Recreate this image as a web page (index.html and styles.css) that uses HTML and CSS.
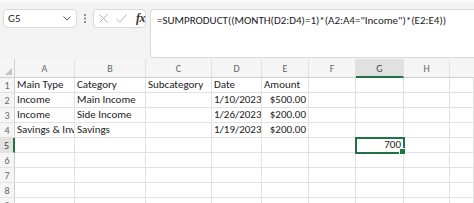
FILE: index.html
```html
<!DOCTYPE html>
<html>
<head>
<meta charset="utf-8">
<link rel="stylesheet" href="styles.css">
</head>
<body>
<div class="app">
  <div class="topbar">
    <div class="namebox">
      <span class="name">G5</span>
      <svg class="chev" width="8" height="5" viewBox="0 0 8 5"><path d="M0.5 0.5 L4 4 L7.5 0.5" fill="none" stroke="#555" stroke-width="1"/></svg>
    </div>
    <div class="dots">
      <svg width="2" height="9" viewBox="0 0 2 9"><circle cx="1" cy="1" r="0.9" fill="#666"/><circle cx="1" cy="4.5" r="0.9" fill="#666"/><circle cx="1" cy="8" r="0.9" fill="#666"/></svg>
    </div>
    <div class="fxbox">
      <svg class="ico" width="9" height="9" viewBox="0 0 9 9"><path d="M0.5 0.5 L8.5 8.5 M8.5 0.5 L0.5 8.5" stroke="#b5b5b5" stroke-width="1" fill="none"/></svg>
      <svg class="ico" width="11" height="9" viewBox="0 0 11 9"><path d="M0.5 5 L3.8 8.2 L10.5 0.6" stroke="#b5b5b5" stroke-width="1" fill="none"/></svg>
      <span class="fx">fx</span>
    </div>
    <div class="formula">=SUMPRODUCT((MONTH(D2:D4)=1)*(A2:A4="Income")*(E2:E4))</div>
  </div>
  <div class="sheet">
    <div class="ch corner"><svg width="7" height="7" viewBox="0 0 7 7"><path d="M7 0 L7 7 L0 7 Z" fill="#c4c4c4"/></svg></div>
    <div class="ch">A</div><div class="ch">B</div><div class="ch">C</div><div class="ch">D</div><div class="ch">E</div><div class="ch">F</div><div class="ch sel">G</div><div class="ch">H</div><div class="ch last"></div>

    <div class="rh">1</div><div class="c">Main Type</div><div class="c">Category</div><div class="c">Subcategory</div><div class="c">Date</div><div class="c">Amount</div><div class="c"></div><div class="c"></div><div class="c"></div><div class="c"></div>
    <div class="rh">2</div><div class="c">Income</div><div class="c">Main Income</div><div class="c"></div><div class="c r">1/10/2023</div><div class="c r">$500.00</div><div class="c"></div><div class="c"></div><div class="c"></div><div class="c"></div>
    <div class="rh">3</div><div class="c">Income</div><div class="c">Side Income</div><div class="c"></div><div class="c r">1/26/2023</div><div class="c r">$200.00</div><div class="c"></div><div class="c"></div><div class="c"></div><div class="c"></div>
    <div class="rh">4</div><div class="c">Savings &amp; Investments</div><div class="c">Savings</div><div class="c"></div><div class="c r">1/19/2023</div><div class="c r">$200.00</div><div class="c"></div><div class="c"></div><div class="c"></div><div class="c"></div>
    <div class="rh selrow">5</div><div class="c"></div><div class="c"></div><div class="c"></div><div class="c"></div><div class="c"></div><div class="c"></div><div class="c r active">700<span class="handle"></span></div><div class="c"></div><div class="c"></div>
    <div class="rh">6</div><div class="c"></div><div class="c"></div><div class="c"></div><div class="c"></div><div class="c"></div><div class="c"></div><div class="c"></div><div class="c"></div><div class="c"></div>
    <div class="rh">7</div><div class="c"></div><div class="c"></div><div class="c"></div><div class="c"></div><div class="c"></div><div class="c"></div><div class="c"></div><div class="c"></div><div class="c"></div>
    <div class="rh">8</div><div class="c"></div><div class="c"></div><div class="c"></div><div class="c"></div><div class="c"></div><div class="c"></div><div class="c"></div><div class="c"></div><div class="c"></div>
    <div class="rh">9</div><div class="c"></div><div class="c"></div><div class="c"></div><div class="c"></div><div class="c"></div><div class="c"></div><div class="c"></div><div class="c"></div><div class="c"></div>
  </div>
</div>
</body>
</html>
```
FILE: styles.css
```css
html, body {
  margin: 0;
  padding: 0;
  background: #ffffff;
}
body {
  width: 474px;
  height: 203px;
  overflow: hidden;
  font-family: Calibri, Carlito, Lato, "Open Sans", sans-serif;
}
.app {
  display: flex;
  flex-direction: column;
  width: 474px;
  height: 203px;
  overflow: hidden;
}
.topbar {
  display: flex;
  align-items: flex-start;
  height: 59px;
  box-sizing: border-box;
  padding: 9px 0 0 3px;
  background: #f3f3f3;
  border-top: 2px solid #fafafa;
  padding-top: 7px;
  flex-shrink: 0;
}
.namebox {
  width: 74px;
  height: 19px;
  box-sizing: border-box;
  background: #fff;
  border: 1px solid #dadada;
  border-radius: 4px;
  display: flex;
  align-items: center;
  justify-content: space-between;
  padding: 0 5px 0 4px;
  font-size: 11px;
  color: #222;
}
.dots {
  width: 16px;
  height: 19px;
  display: flex;
  align-items: center;
  justify-content: center;
}
.fxbox {
  width: 53px;
  height: 19px;
  box-sizing: border-box;
  background: #fff;
  border: 1px solid #dadada;
  border-radius: 4px;
  display: flex;
  align-items: center;
  padding-left: 5px;
  gap: 8px;
}
.fx {
  font-family: "Liberation Serif", "DejaVu Serif", serif;
  font-style: italic;
  font-weight: bold;
  font-size: 12px;
  color: #333;
  letter-spacing: -0.5px;
  margin-left: 1px;
}
.formula {
  margin-left: 4px;
  flex: 1;
  height: 49px;
  box-sizing: border-box;
  background: #fff;
  border: 1px solid #dadada;
  border-right: none;
  border-radius: 4px 0 0 4px;
  padding: 4px 0 0 6px;
  font-size: 11px;
  color: #222;
  white-space: nowrap;
}
.sheet {
  display: grid;
  grid-template-columns: 15px 60px 71px 66px 50px 47px 47px 48px 46px 1fr;
  grid-template-rows: 19px repeat(9, 15px);
  background: #fff;
  font-size: 11px;
  color: #222;
}
.ch {
  background: #f5f5f5;
  border-bottom: 1px solid #cfcfcf;
  border-right: 1px solid #e2e2e2;
  box-sizing: border-box;
  display: flex;
  align-items: center;
  justify-content: center;
  font-size: 10px;
  color: #666;
  padding-top: 1px;
}
.ch.corner {
  align-items: flex-end;
  justify-content: flex-end;
  padding: 0 2px 2px 0;
  border-right: 1px solid #cfcfcf;
}
.ch.sel {
  background: #e1e1e1;
  border-bottom: 2px solid #217346;
  color: #444;
}
.ch.last {
  border-right: none;
}
.rh {
  background: #f5f5f5;
  border-right: 1px solid #cfcfcf;
  border-bottom: 1px solid #e2e2e2;
  box-sizing: border-box;
  display: flex;
  align-items: center;
  justify-content: center;
  font-size: 10px;
  color: #666;
}
.rh.selrow {
  background: #e1e1e1;
  border-right: 2px solid #217346;
  color: #444;
}
.c {
  box-sizing: border-box;
  border-right: 1px solid #e2e2e2;
  border-bottom: 1px solid #e2e2e2;
  padding: 0 2px;
  white-space: nowrap;
  overflow: hidden;
  line-height: 14px;
}
.c.r {
  text-align: right;
}
.c.active {
  position: relative;
  overflow: visible;
  outline: 2px solid #217346;
  outline-offset: -1px;
  z-index: 1;
}
.handle {
  position: absolute;
  right: -3px;
  bottom: -3px;
  width: 5px;
  height: 5px;
  background: #217346;
  border: 1px solid #fff;
  box-sizing: content-box;
}
```
